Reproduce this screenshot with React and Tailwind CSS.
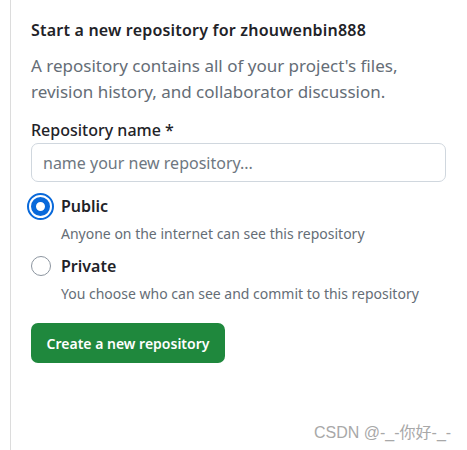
const App = () => {
  return (
    <div className="w-[467px] h-[450px] bg-white relative overflow-hidden" style={{ fontFamily: '"Noto Sans", "Noto Sans CJK SC", sans-serif' }}>
      <div className="ml-[10px] h-full border-l border-[#dcdcdc] pl-[20px] pt-[18px]">
        <h2 className="text-[16px] leading-[24px] font-semibold text-[#1f2328] tracking-[0.2px]">Start a new repository for zhouwenbin888</h2>
        <p className="mt-[11px] w-[420px] text-[17px] leading-[26px] text-[#656d76]">
          A repository contains all of your project's files,<br />revision history, and collaborator discussion.
        </p>
        <label className="block mt-[13px] text-[16px] leading-[24px] font-medium text-[#1f2328]">Repository name *</label>
        <input
          className="block mt-[1px] w-[415px] h-[39px] rounded-[7px] border border-[#d0d7de] px-[11px] text-[16px] placeholder-[#6e7781] outline-none"
          placeholder="name your new repository..."
        />
        <div className="mt-[10px] flex items-center h-[28px]">
          <div className="-ml-[4px] w-[27px] h-[27px] rounded-full border-2 border-[#0969da] flex items-center justify-center">
            <div className="w-[19px] h-[19px] rounded-full border-[5px] border-[#0969da] bg-white" />
          </div>
          <span className="ml-[7px] text-[16px] font-semibold text-[#1f2328]">Public</span>
        </div>
        <p className="ml-[30px] mt-[4px] text-[14px] leading-[20px] text-[#656d76]">Anyone on the internet can see this repository</p>
        <div className="mt-[11px] flex items-center h-[22px]">
          <div className="w-[20px] h-[20px] rounded-full border border-[#8c959f] bg-white" />
          <span className="ml-[10px] text-[16px] font-semibold text-[#1f2328]">Private</span>
        </div>
        <p className="ml-[30px] mt-[7px] text-[14px] leading-[20px] text-[#656d76]">You choose who can see and commit to this repository</p>
        <button className="block mt-[19px] w-[194px] h-[40px] rounded-[7px] bg-[#1f883d] text-white text-[14px] font-semibold">
          Create a new repository
        </button>
      </div>
      <div className="absolute left-[314px] top-[421px] text-[16px] text-[#a8a8a8]" style={{ fontFamily: '"Liberation Sans", "Noto Sans CJK SC", sans-serif' }}>
        CSDN @-_-你好-_-
      </div>
    </div>
  );
};

export default App;
